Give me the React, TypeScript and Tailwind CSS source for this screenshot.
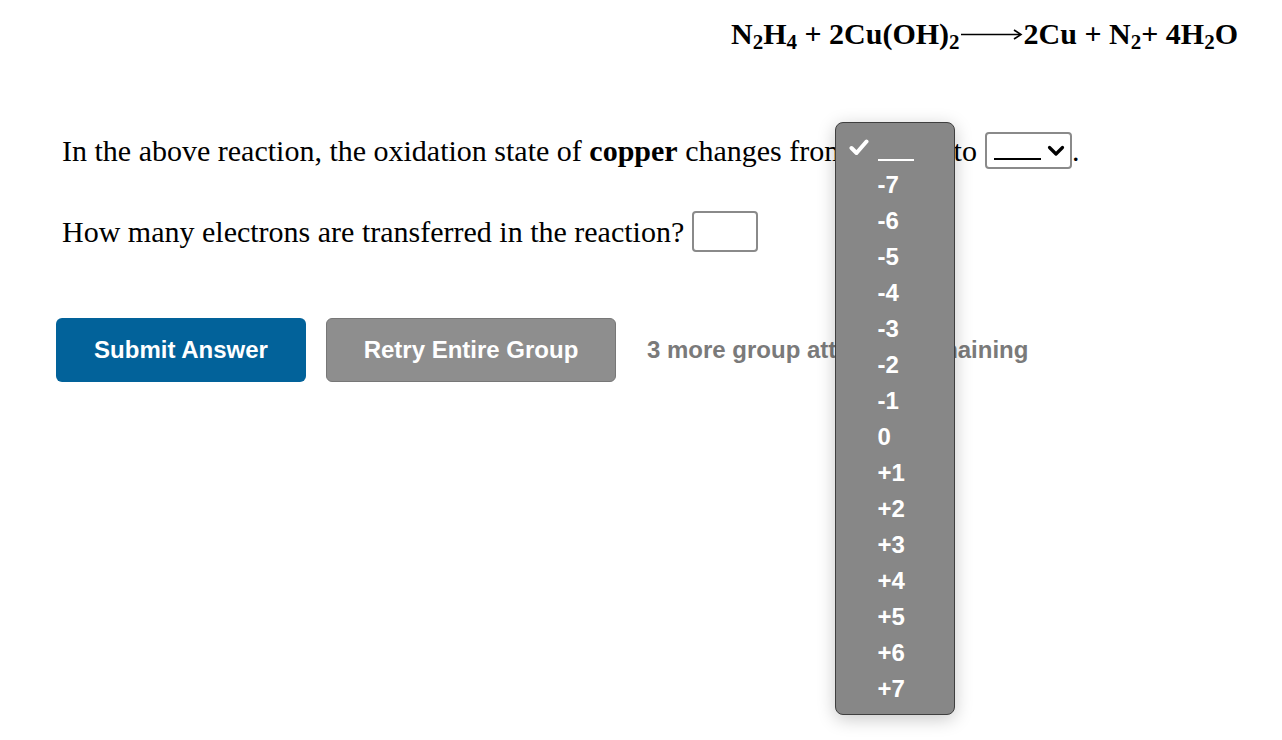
import React from 'react'

const options = ['-7', '-6', '-5', '-4', '-3', '-2', '-1', '0', '+1', '+2', '+3', '+4', '+5', '+6', '+7']

function Arrow() {
  return (
    <svg width="62" height="12" viewBox="0 0 62 12" className="mx-[1px] self-center">
      <line x1="0" y1="6.5" x2="59" y2="6.5" stroke="#000" strokeWidth="1.6" />
      <path d="M53 2 L60 6.5 L53 11" fill="none" stroke="#000" strokeWidth="1.6" />
    </svg>
  )
}

function Blank() {
  return <span className="inline-block w-[47px] border-b-2 border-black h-[14px] translate-y-[2px]" />
}

function Chevron() {
  return (
    <svg width="18" height="12" viewBox="0 0 18 12">
      <path d="M2.5 2.5 L9 9 L15.5 2.5" fill="none" stroke="#000" strokeWidth="3.2" strokeLinecap="round" strokeLinejoin="round" />
    </svg>
  )
}

function OpenMenu() {
  return (
    <div className="absolute left-[-18px] top-[-10px] w-[120px] h-[593px] rounded-[8px] border border-[#3f3f3f] bg-[#878787] shadow-[0_4px_18px_rgba(0,0,0,0.22)] z-10 font-['Liberation_Sans',Arial,sans-serif] text-white text-[24px]">
      <div className="relative flex flex-col pt-[8px]">
        <div className="h-[36px] flex items-center">
          <svg width="20" height="17" viewBox="0 0 20 17" className="ml-[13px] mt-[-4px]">
            <path d="M2.5 9 L7.5 14 L17.5 2.5" fill="none" stroke="#fff" strokeWidth="4" strokeLinecap="round" strokeLinejoin="round" />
          </svg>
          <span className="ml-[9px] inline-block w-[36px] border-b-2 border-white h-[12px] translate-y-[6px]" />
        </div>
        {options.map((o) => (
          <div key={o} className="h-[36px] flex items-center pl-[42px] font-bold leading-none">
            {o}
          </div>
        ))}
      </div>
    </div>
  )
}

export default function App() {
  return (
    <div className="w-[1282px] h-[740px] bg-white text-black font-['Liberation_Serif','Times_New_Roman',serif] overflow-hidden">
      <div className="flex justify-end pr-[44px] pt-[16px] text-[30px] font-bold leading-[36px]">
        <div className="flex items-baseline">
          <span>N<sub className="text-[21px]">2</sub>H<sub className="text-[21px]">4</sub> + 2Cu(OH)<sub className="text-[21px]">2</sub></span>
          <Arrow />
          <span>2Cu + N<sub className="text-[21px]">2</sub>+ 4H<sub className="text-[21px]">2</sub>O</span>
        </div>
      </div>

      <div className="pl-[62px] pt-[80px] text-[30px] leading-[36px]">
        <div className="flex items-center">
          <span>
            In the above reaction, the oxidation state of <b>copper</b> changes from
          </span>
          <div className="relative ml-[5px] w-[98px] h-[37px]">
            <OpenMenu />
          </div>
          <span className="ml-[3px]">to</span>
          <div className="ml-[8px] w-[87px] h-[37px] rounded-[4px] border-2 border-[#8a8a8a] flex items-center pl-[7px] pr-[5px] justify-between">
            <Blank />
            <Chevron />
          </div>
          <span>.</span>
        </div>

        <div className="flex items-center mt-[42px]">
          <span>How many electrons are transferred in the reaction?</span>
          <div className="ml-[8px] w-[66px] h-[41px] rounded-[4px] border-2 border-[#8a8a8a]" />
        </div>

        <div className="flex items-center mt-[66px] ml-[-6px] font-['Liberation_Sans',Arial,sans-serif] font-bold text-[24px]">
          <button className="w-[250px] h-[64px] rounded-[6px] bg-[#02629a] text-white">Submit Answer</button>
          <button className="ml-[20px] w-[290px] h-[64px] rounded-[6px] bg-[#8e8e8e] border border-[#777] text-white">Retry Entire Group</button>
          <span className="ml-[31px] text-[#7a7a7a]">3 more group attempts remaining</span>
        </div>
      </div>
    </div>
  )
}
